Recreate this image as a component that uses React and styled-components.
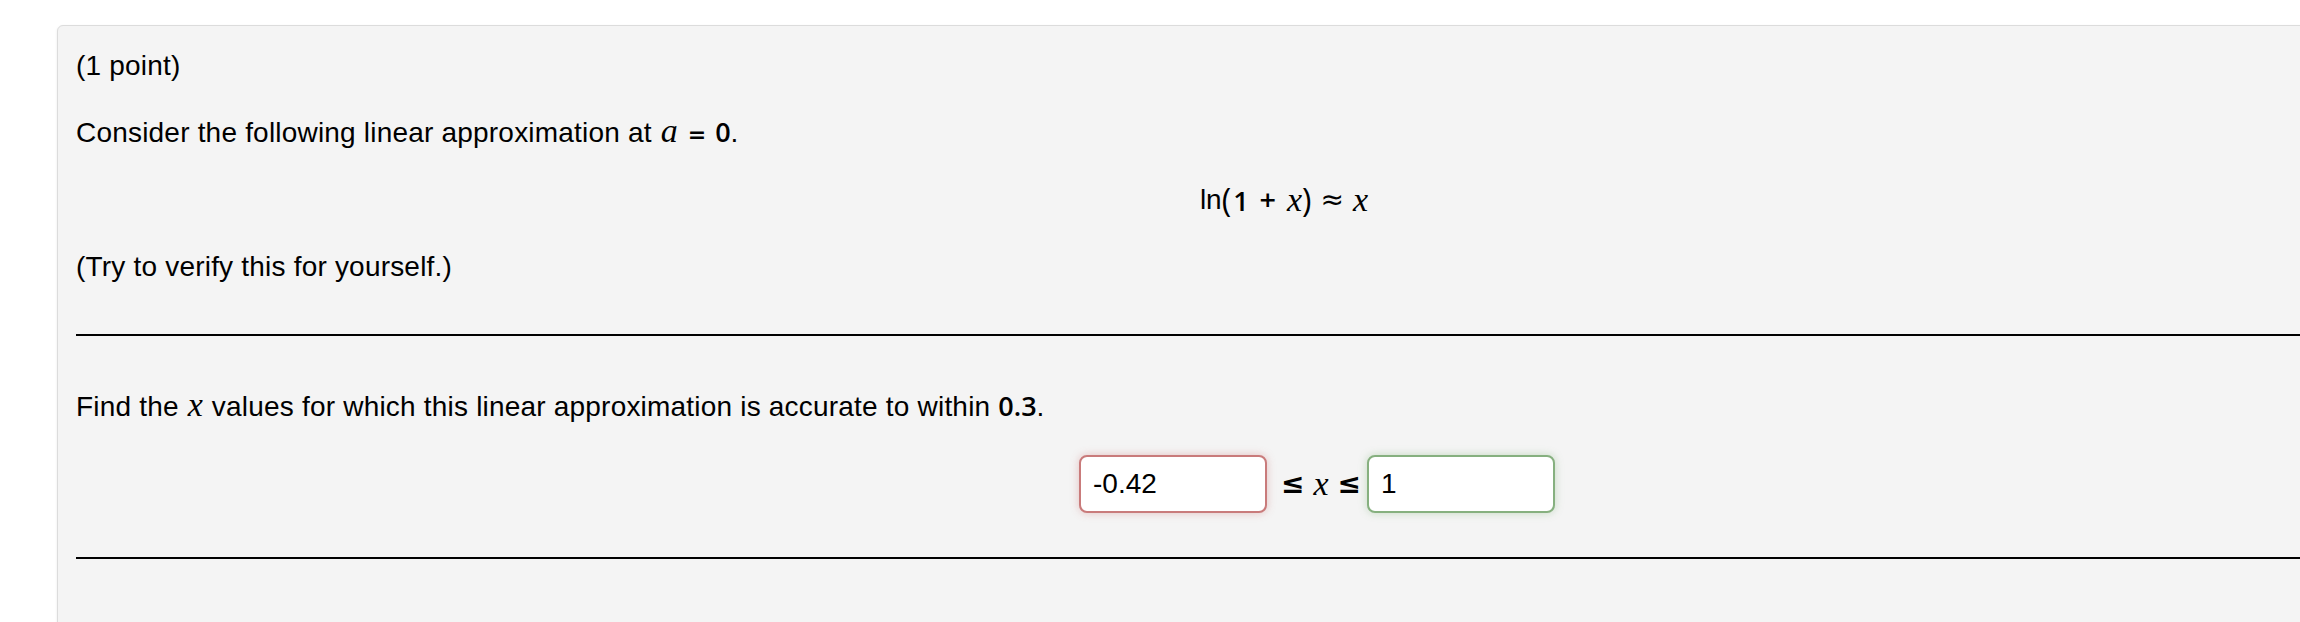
import React from 'react'
import styled, { createGlobalStyle } from 'styled-components'

const GlobalStyle = createGlobalStyle`
  html, body {
    margin: 0;
    padding: 0;
    background: white;
    overflow: hidden;
  }
  body {
    font-family: "Liberation Sans", Arial, Helvetica, sans-serif;
    color: black;
  }
`

const Page = styled.div`
  padding: 25px 0 0 57px;
`

const Problem = styled.div`
  width: 2416px;
  min-height: 640px;
  background: #f4f4f4;
  border: 1px solid #dcdcdc;
  border-radius: 6px;
  box-shadow: 0 1px 3px rgba(0, 0, 0, 0.08);
  padding: 20px 18px 0 18px;
  display: flex;
  flex-direction: column;
`

const Text = styled.div`
  font-size: 28px;
  line-height: 40px;
  letter-spacing: 0.2px;
  margin-top: ${(p) => p.gap || 0}px;
`

const Display = styled.div`
  display: flex;
  justify-content: center;
  align-items: center;
  font-size: 28px;
  line-height: 40px;
  margin-top: ${(p) => p.gap || 0}px;
  padding-left: ${(p) => p.shift || 0}px;
`

const Rule = styled.div`
  height: 2px;
  background: #000;
  margin-top: ${(p) => p.gap || 0}px;
`

const Var = styled.span`
  font-family: "Liberation Serif", "Times New Roman", serif;
  font-style: italic;
  font-size: 34px;
  line-height: 1;
  letter-spacing: 0;
  margin: 0 ${(p) => p.space || 0}px;
`

const Num = styled.span`
  font-family: "Open Sans", "DejaVu Sans", sans-serif;
  font-weight: 600;
  font-size: 27px;
  line-height: 1;
  letter-spacing: 0;
  margin: 0 ${(p) => p.space || 0}px;
`

const Paren = styled.span`
  font-family: "Open Sans", "DejaVu Sans", sans-serif;
  font-size: 32px;
  line-height: 1;
  margin-right: ${(p) => p.after || 0}px;
`

const Op = styled.span`
  font-family: "DejaVu Sans", sans-serif;
  font-weight: ${(p) => (p.bold ? 700 : 400)};
  font-size: ${(p) => p.size || 26}px;
  line-height: 1;
  letter-spacing: 0;
  margin: 0 ${(p) => p.space || 0}px;
`

const Answer = styled.input`
  box-sizing: border-box;
  width: 188px;
  height: 58px;
  padding: 0 12px;
  border: 2px solid ${(p) => (p.correct ? '#86b07f' : '#c97b7b')};
  border-radius: 8px;
  background: white;
  box-shadow: 0 0 8px
    ${(p) => (p.correct ? 'rgba(110, 170, 100, 0.35)' : 'rgba(200, 100, 100, 0.35)')};
  font-family: "Liberation Sans", Arial, sans-serif;
  font-size: 28px;
  color: black;
  outline: none;
`

const Relation = styled.span`
  display: inline-flex;
  align-items: center;
  margin: 0 6px 0 14px;
`

const App = () => (
  <Page>
    <GlobalStyle />
    <Problem>
      <Text>(1 point)</Text>
      <Text gap={27}>
        Consider the following linear approximation at <Var space={1}>a</Var>
        <Op bold size={22} space={9}>=</Op>
        <Num>0</Num>.
      </Text>
      <Display gap={27}>
        ln<Paren after={2}>(</Paren>
        <Num>1</Num>
        <Op bold size={22} space={10}>+</Op>
        <Var>x</Var>
        <Paren>)</Paren>
        <Op size={28} space={9}>≈</Op>
        <Var>x</Var>
      </Display>
      <Text gap={27}>(Try to verify this for yourself.)</Text>
      <Rule gap={47} />
      <Text gap={51}>
        Find the <Var space={1}>x</Var> values for which this linear approximation is accurate
        to within <Num>0.3</Num>.
      </Text>
      <Display gap={28} shift={66}>
        <Answer defaultValue="-0.42" />
        <Relation>
          <Op size={28} bold>≤</Op>
          <Var space={9}>x</Var>
          <Op size={28} bold>≤</Op>
        </Relation>
        <Answer correct defaultValue="1" />
      </Display>
      <Rule gap={44} />
    </Problem>
  </Page>
)

export default App
